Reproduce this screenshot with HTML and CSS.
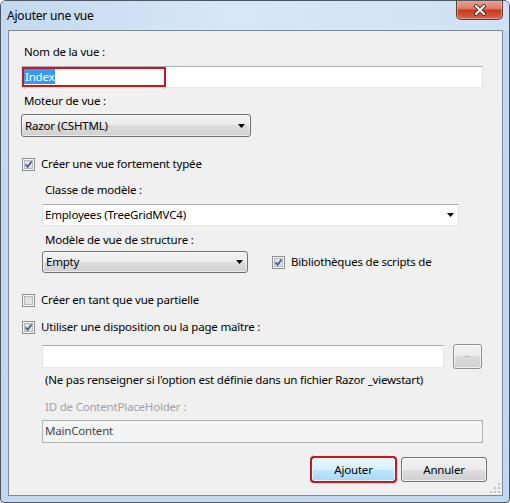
FILE: index.html
```html
<!DOCTYPE html>
<html lang="fr">
<head>
<meta charset="utf-8">
<title>Ajouter une vue</title>
<link rel="stylesheet" href="styles.css">
</head>
<body>
<div class="window">
  <div class="titlebar">
    <span class="title">Ajouter une vue</span>
    <div class="close">
      <svg width="18" height="12" viewBox="0 0 18 12"><path d="M5 2 L13 10 M13 2 L5 10" stroke="#5b2a22" stroke-width="4" stroke-linecap="round"/><path d="M5 2 L13 10 M13 2 L5 10" stroke="#ffffff" stroke-width="2.2" stroke-linecap="round"/></svg>
    </div>
  </div>
  <div class="client">
    <div class="label l-name">Nom de la vue :</div>
    <div class="textbox tb-name"><span class="sel">Index</span><span class="redbox"></span></div>

    <div class="label l-engine">Moteur de vue :</div>
    <div class="combo c-engine"><span class="ctext">Razor (CSHTML)</span><svg class="arrow" width="7" height="4" viewBox="0 0 7 4"><path d="M0 0h7L3.5 4z"/></svg></div>

    <div class="check-row cr-typed">
      <svg class="cb" width="13" height="13" viewBox="0 0 13 13"><rect x="0.5" y="0.5" width="12" height="12" fill="#f6f6f6" stroke="#8e8f8f"/><rect x="2.5" y="2.5" width="8" height="8" fill="#dfe2e7" stroke="#b4b9bf"/><path d="M3.6 6.4 L5.6 8.8 L9.6 3.4" stroke="#4a5c8f" stroke-width="1.7" fill="none"/></svg>
      <span>Créer une vue fortement typée</span>
    </div>

    <div class="label indent l-class">Classe de modèle :</div>
    <div class="editcombo c-class"><span class="ctext">Employees (TreeGridMVC4)</span><svg class="arrow" width="7" height="4" viewBox="0 0 7 4"><path d="M0 0h7L3.5 4z"/></svg></div>

    <div class="label indent l-scaffold">Modèle de vue de structure :</div>
    <div class="row-scaffold">
      <div class="combo c-scaffold"><span class="ctext">Empty</span><svg class="arrow" width="7" height="4" viewBox="0 0 7 4"><path d="M0 0h7L3.5 4z"/></svg></div>
      <div class="check-row cr-scripts">
        <svg class="cb" width="13" height="13" viewBox="0 0 13 13"><rect x="0.5" y="0.5" width="12" height="12" fill="#f6f6f6" stroke="#8e8f8f"/><rect x="2.5" y="2.5" width="8" height="8" fill="#dfe2e7" stroke="#b4b9bf"/><path d="M3.6 6.4 L5.6 8.8 L9.6 3.4" stroke="#4a5c8f" stroke-width="1.7" fill="none"/></svg>
        <span>Bibliothèques de scripts de</span>
      </div>
    </div>

    <div class="check-row cr-partial">
      <svg class="cb" width="13" height="13" viewBox="0 0 13 13"><rect x="0.5" y="0.5" width="12" height="12" fill="#f6f6f6" stroke="#8e8f8f"/><rect x="2.5" y="2.5" width="8" height="8" fill="#dfe2e7" stroke="#b4b9bf"/></svg>
      <span>Créer en tant que vue partielle</span>
    </div>

    <div class="check-row cr-layout">
      <svg class="cb" width="13" height="13" viewBox="0 0 13 13"><rect x="0.5" y="0.5" width="12" height="12" fill="#f6f6f6" stroke="#8e8f8f"/><rect x="2.5" y="2.5" width="8" height="8" fill="#dfe2e7" stroke="#b4b9bf"/><path d="M3.6 6.4 L5.6 8.8 L9.6 3.4" stroke="#4a5c8f" stroke-width="1.7" fill="none"/></svg>
      <span>Utiliser une disposition ou la page maître :</span>
    </div>

    <div class="row-layout">
      <div class="textbox tb-layout"></div>
      <div class="btn btn-browse">...</div>
    </div>

    <div class="label indent note">(Ne pas renseigner si l'option est définie dans un fichier Razor _viewstart)</div>

    <div class="label indent disabled l-cph">ID de ContentPlaceHolder :</div>
    <div class="textbox tb-cph">MainContent</div>

    <div class="buttons">
      <div class="btn btn-default">Ajouter</div>
      <div class="btn btn-cancel">Annuler</div>
    </div>

    <svg class="grip" width="10" height="10" viewBox="0 0 10 10" fill="#b9c3cc"><rect x="8" y="0" width="2" height="2"/><rect x="4" y="4" width="2" height="2"/><rect x="8" y="4" width="2" height="2"/><rect x="0" y="8" width="2" height="2"/><rect x="4" y="8" width="2" height="2"/><rect x="8" y="8" width="2" height="2"/></svg>
  </div>
</div>
</body>
</html>
```

FILE: styles.css
```css
* { box-sizing: border-box; }
html, body { margin: 0; padding: 0; background: #ffffff; }
body {
  font-family: "Noto Sans", "Open Sans", sans-serif;
  font-size: 11.5px;
  letter-spacing: -0.2px;
  color: #000;
}
.window {
  width: 510px;
  height: 503px;
  border: 1px solid #4c5866;
  border-radius: 6px 6px 4px 4px;
  background: linear-gradient(180deg, #d3e4f6 0%, #c5daf0 6%, #c2d8ef 100%);
  display: flex;
  flex-direction: column;
  overflow: hidden;
}
.titlebar {
  height: 29px;
  display: flex;
  align-items: flex-start;
  justify-content: space-between;
  background: linear-gradient(90deg, #c3d9f0 0%, #d8e7f7 45%, #cfe1f4 100%);
}
.title {
  padding: 7px 0 0 6px;
  line-height: 16px;
  font-size: 12px;
}
.close {
  width: 47px;
  height: 20px;
  margin: -1px 6px 0 0;
  border: 1px solid #5e3a35;
  border-top: none;
  border-radius: 0 0 5px 5px;
  background: linear-gradient(180deg, #eba796 0%, #db7a64 45%, #c63a22 55%, #d8654a 100%);
  box-shadow: inset 0 0 0 1px rgba(255,255,255,0.35);
  display: flex;
  align-items: center;
  justify-content: center;
}
.client {
  position: relative;
  flex: 1;
  margin: 0 6px 6px 7px;
  border: 1px solid #7d8b98;
  background: #f0f0f0;
  padding: 13px 19px 0 12px;
  display: flex;
  flex-direction: column;
  align-items: flex-start;
}
.label {
  line-height: 16px;
  height: 16px;
  padding-left: 3px;
  white-space: nowrap;
}
.indent { margin-left: 21px; }
.disabled { color: #a2a2a2; }

.textbox {
  position: relative;
  height: 22px;
  background: #fff;
  border: 1px solid #e2e3ea;
  border-top-color: #abadb3;
  border-bottom-color: #e3e9ef;
  padding: 2px 0 0 2px;
  line-height: 16px;
}
.tb-name { width: 462px; margin-top: 6px; }
.sel { background: #3399ff; color: #fff; padding: 0 1px; }
.redbox {
  position: absolute;
  left: 0;
  top: 0;
  width: 144px;
  height: 20px;
  border: 2px solid #d1121f;
}
.l-engine { margin-top: 5px; }

.combo {
  position: relative;
  height: 23px;
  border: 1px solid #707070;
  border-radius: 3px;
  background: linear-gradient(180deg, #f2f2f2 0%, #ebebeb 50%, #dddddd 50%, #cfcfcf 100%);
  box-shadow: inset 0 0 0 1px rgba(255,255,255,0.6);
  display: flex;
  align-items: center;
  padding-left: 3px;
}
.ctext { line-height: 16px; white-space: nowrap; }
.arrow { position: absolute; right: 4px; top: 50%; margin-top: -2px; }
.c-engine { width: 230px; margin-top: 5px; }
.c-engine .arrow { right: 5px; }

.check-row {
  display: flex;
  align-items: center;
  gap: 6px;
  height: 16px;
  line-height: 16px;
  padding-left: 1px;
  white-space: nowrap;
}
.cr-typed { margin-top: 19px; }
.l-class { margin-top: 10px; }

.editcombo {
  position: relative;
  width: 417px;
  height: 22px;
  margin-left: 21px;
  margin-top: 6px;
  background: #fff;
  border: 1px solid #e2e3ea;
  border-top-color: #abadb3;
  border-bottom-color: #e3e9ef;
  display: flex;
  align-items: center;
  padding-left: 2px;
}
.l-scaffold { margin-top: 6px; }
.row-scaffold {
  display: flex;
  align-items: center;
  margin-top: 3px;
  margin-left: 21px;
}
.c-scaffold { width: 206px; height: 22px; }
.cr-scripts { margin-left: 24px; padding-left: 0; }
.cr-partial { margin-top: 19px; }
.cr-layout { margin-top: 11px; }

.row-layout {
  display: flex;
  align-items: center;
  margin-top: 9px;
  margin-left: 21px;
  height: 25px;
}
.tb-layout { width: 402px; height: 23px; }

.btn {
  height: 25px;
  border: 1px solid #707070;
  border-radius: 3px;
  background: linear-gradient(180deg, #f2f2f2 0%, #ebebeb 50%, #dddddd 50%, #cfcfcf 100%);
  box-shadow: inset 0 0 0 1px rgba(255,255,255,0.7);
  display: flex;
  align-items: center;
  justify-content: center;
  line-height: 16px;
}
.btn-browse {
  width: 29px;
  height: 25px;
  margin-left: 9px;
  color: #8a8a8a;
  font-size: 9px;
  align-items: flex-end;
  padding-bottom: 6px;
  border-color: #8e8f8f;
}
.note { margin-top: 3px; }
.l-cph { margin-top: 11px; }
.tb-cph {
  width: 441px;
  height: 23px;
  margin-left: 21px;
  margin-top: 5px;
  background: #f4f4f4;
  border: 1px solid #adb2b5;
  color: #444;
  padding-top: 2px;
}
.buttons {
  align-self: flex-end;
  display: flex;
  gap: 5px;
  margin-top: 14px;
  margin-right: -4px;
}
.btn-default {
  width: 85px;
  border-color: #3c7fb1;
  background: linear-gradient(180deg, #eaf6fd 0%, #d9f0fc 50%, #bee6fd 50%, #a7d9f5 100%);
  outline: 2px solid #d0111e;
  outline-offset: -1px;
}
.btn-cancel { width: 86px; }
.grip {
  position: absolute;
  right: 2px;
  bottom: 2px;
}
```
